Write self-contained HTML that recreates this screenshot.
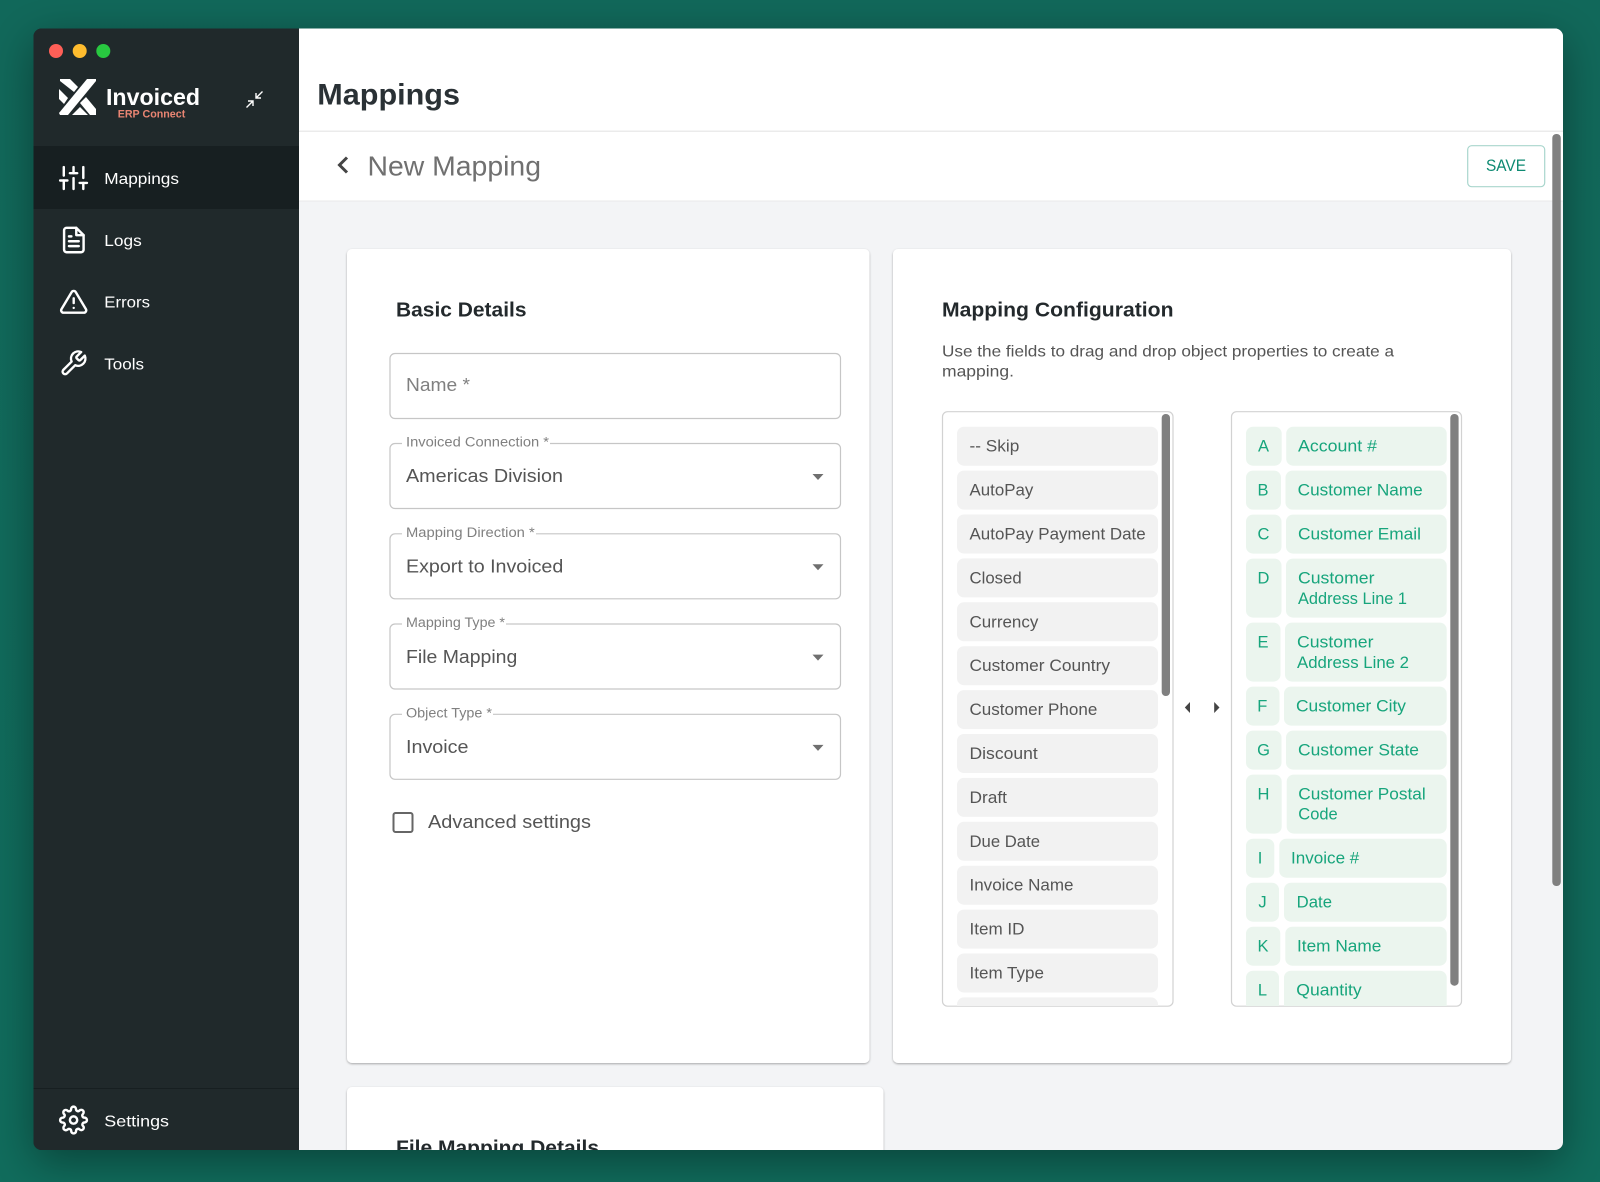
<!DOCTYPE html>
<html>
<head>
<meta charset="utf-8">
<title>Mappings</title>
<style>
html,body{margin:0;padding:0;width:1600px;height:1182px;overflow:hidden;background:#10695a}
svg{display:block}
text{font-family:"Liberation Sans",sans-serif}
.lst{font-size:16.5px;fill:#555}
.grn{font-size:16.5px;fill:#17a57c}
.lab{font-size:13.5px;fill:#808080}
.val{font-size:18px;fill:#555}
.nav{font-size:16px;fill:#fff}
.ic{fill:none;stroke:#fff;stroke-width:2;stroke-linecap:round;stroke-linejoin:round}
</style>
</head>
<body>
<svg xmlns="http://www.w3.org/2000/svg" width="1600" height="1182" viewBox="0 0 1600 1182">
<defs>
<linearGradient id="bg" x1="0" y1="0" x2="0" y2="1"><stop offset="0" stop-color="#11685a"/><stop offset="1" stop-color="#106c5c"/></linearGradient>
<filter id="ws" x="-10%" y="-10%" width="120%" height="125%"><feDropShadow dx="0" dy="12" stdDeviation="22" flood-color="#000" flood-opacity=".38"/></filter>
<filter id="cs" x="-5%" y="-5%" width="110%" height="110%"><feDropShadow dx="0" dy="1" stdDeviation="1" flood-color="#000" flood-opacity=".32"/></filter>
<clipPath id="win"><rect x="33.5" y="28.5" width="1529.5" height="1121.5" rx="8"/></clipPath>
<clipPath id="lb1"><rect x="943" y="412" width="229" height="594" rx="5"/></clipPath>
<clipPath id="lb2"><rect x="1232" y="412" width="229" height="594" rx="5"/></clipPath>
</defs>
<rect width="1600" height="1182" fill="url(#bg)"/>
<rect x="33.5" y="28.5" width="1529.5" height="1121.5" rx="8" fill="#20292b" filter="url(#ws)"/>
<g clip-path="url(#win)">
<rect x="299" y="28" width="1265" height="1122" fill="#f3f4f6"/>
<rect x="299" y="28" width="1265" height="173" fill="#fff"/>
<rect x="299" y="130.5" width="1265" height="1.5" fill="#ebebeb"/>
<rect x="299" y="200.5" width="1265" height="1" fill="#e8e9ea"/>

<!-- sidebar -->
<rect x="33" y="28" width="266" height="1122" fill="#20292b"/>
<rect x="33" y="146" width="266" height="63" fill="#171f21"/>
<rect x="33" y="1088" width="266" height="1" fill="#171f21"/>
<circle cx="56" cy="51" r="7" fill="#fe5f57"/>
<circle cx="79.7" cy="51" r="7" fill="#febc2e"/>
<circle cx="103.3" cy="51" r="7" fill="#28c840"/>

<!-- logo -->
<g fill="#fff">
<polygon points="60,79 70,79 78,87 74,92 60,81"/>
<polygon points="87,79 96,79 96,81 68,115 60,115 59,113"/>
<polygon points="59,89 68,98 64,104 59,99"/>
<polygon points="86,97 96,109 96,115 90,115 80,103"/>
<polygon points="72,115 80,107 88,115"/>
</g>
<text x="106" y="105" font-size="23" font-weight="700" fill="#fff" textLength="94" lengthAdjust="spacingAndGlyphs">Invoiced</text>
<text x="117.7" y="117.3" font-size="11" font-weight="700" fill="#ea8573" textLength="67.6" lengthAdjust="spacingAndGlyphs">ERP Connect</text>
<g fill="none" stroke="#fff" stroke-width="1.4">
<path d="M262.5 91.5L256 98M256 93V98H261"/>
<path d="M246.5 107.5L253 101M248 101H253V106"/>
</g>

<!-- nav icons -->
<g class="ic" transform="translate(58.9,163.4) scale(1.22)">
<line x1="4" y1="21" x2="4" y2="14"/><line x1="4" y1="10" x2="4" y2="3"/><line x1="12" y1="21" x2="12" y2="12"/><line x1="12" y1="8" x2="12" y2="3"/><line x1="20" y1="21" x2="20" y2="16"/><line x1="20" y1="12" x2="20" y2="3"/><line x1="1" y1="14" x2="7" y2="14"/><line x1="9" y1="8" x2="15" y2="8"/><line x1="17" y1="16" x2="23" y2="16"/>
</g>
<g class="ic" transform="translate(59.2,225.4) scale(1.22)">
<path d="M14 2H6a2 2 0 0 0-2 2v16a2 2 0 0 0 2 2h12a2 2 0 0 0 2-2V8z"/><polyline points="14 2 14 8 20 8"/><line x1="16" y1="13" x2="8" y2="13"/><line x1="16" y1="17" x2="8" y2="17"/><polyline points="10 9 9 9 8 9"/>
</g>
<g class="ic" transform="translate(59.3,287.5) scale(1.2)">
<path d="M10.29 3.86L1.82 18a2 2 0 0 0 1.71 3h16.94a2 2 0 0 0 1.71-3L13.71 3.86a2 2 0 0 0-3.42 0z"/><line x1="12" y1="9" x2="12" y2="13"/><line x1="12" y1="17" x2="12.01" y2="17"/>
</g>
<g class="ic" transform="translate(59,349) scale(1.2)">
<path d="M14.7 6.3a1 1 0 0 0 0 1.4l1.6 1.6a1 1 0 0 0 1.4 0l3.77-3.77a6 6 0 0 1-7.94 7.94l-6.91 6.91a2.12 2.12 0 0 1-3-3l6.91-6.91a6 6 0 0 1 7.94-7.94l-3.76 3.76z"/>
</g>
<g class="ic" transform="translate(58.9,1105.4) scale(1.22)">
<circle cx="12" cy="12" r="3"/>
<path d="M19.4 15a1.65 1.65 0 0 0 .33 1.82l.06.06a2 2 0 0 1 0 2.83 2 2 0 0 1-2.83 0l-.06-.06a1.65 1.65 0 0 0-1.82-.33 1.65 1.65 0 0 0-1 1.51V21a2 2 0 0 1-2 2 2 2 0 0 1-2-2v-.09A1.65 1.65 0 0 0 9 19.4a1.65 1.65 0 0 0-1.82.33l-.06.06a2 2 0 0 1-2.83 0 2 2 0 0 1 0-2.83l.06-.06a1.65 1.65 0 0 0 .33-1.82 1.65 1.65 0 0 0-1.51-1H3a2 2 0 0 1-2-2 2 2 0 0 1 2-2h.09A1.65 1.65 0 0 0 4.6 9a1.65 1.65 0 0 0-.33-1.82l-.06-.06a2 2 0 0 1 0-2.83 2 2 0 0 1 2.83 0l.06.06a1.65 1.65 0 0 0 1.82.33H9a1.65 1.65 0 0 0 1-1.51V3a2 2 0 0 1 2-2 2 2 0 0 1 2 2v.09a1.65 1.65 0 0 0 1 1.51 1.65 1.65 0 0 0 1.82-.33l.06-.06a2 2 0 0 1 2.83 0 2 2 0 0 1 0 2.83l-.06.06a1.65 1.65 0 0 0-.33 1.82V9a1.65 1.65 0 0 0 1.51 1H21a2 2 0 0 1 2 2 2 2 0 0 1-2 2h-.09a1.65 1.65 0 0 0-1.51 1z"/>
</g>
<text class="nav" x="104.3" y="184" textLength="74.7" lengthAdjust="spacingAndGlyphs">Mappings</text>
<text class="nav" x="104.3" y="246" textLength="37.4" lengthAdjust="spacingAndGlyphs">Logs</text>
<text class="nav" x="104.3" y="307.7" textLength="45.7" lengthAdjust="spacingAndGlyphs">Errors</text>
<text class="nav" x="104.3" y="369.3" textLength="39.7" lengthAdjust="spacingAndGlyphs">Tools</text>
<text class="nav" x="104.3" y="1126.7" textLength="64.7" lengthAdjust="spacingAndGlyphs">Settings</text>

<!-- headers -->
<text x="317.3" y="104.3" font-size="30" font-weight="700" fill="#2a3135" textLength="142.7" lengthAdjust="spacingAndGlyphs">Mappings</text>
<path d="M347 157.5L339.5 165L347 172.5" fill="none" stroke="#444" stroke-width="3"/>
<text x="367.5" y="175.7" font-size="27.5" fill="#707070" textLength="173.5" lengthAdjust="spacingAndGlyphs">New Mapping</text>
<rect x="1467.7" y="145.7" width="77" height="41" rx="4" fill="#fff" stroke="#a9d6cd" stroke-width="1.2"/>
<text x="1486" y="171" font-size="17" fill="#0e8a72" textLength="40" lengthAdjust="spacingAndGlyphs">SAVE</text>

<!-- cards -->
<rect x="347" y="249" width="522.5" height="814" rx="5" fill="#fff" filter="url(#cs)"/>
<rect x="893" y="249" width="618" height="814" rx="5" fill="#fff" filter="url(#cs)"/>
<rect x="347" y="1087" width="536.5" height="100" rx="5" fill="#fff" filter="url(#cs)"/>
<text x="396" y="316.7" font-size="20.5" font-weight="700" fill="#23292c" textLength="130.5" lengthAdjust="spacingAndGlyphs">Basic Details</text>
<text x="942" y="316.7" font-size="20.5" font-weight="700" fill="#23292c" textLength="231.5" lengthAdjust="spacingAndGlyphs">Mapping Configuration</text>
<text x="396" y="1154.4" font-size="20.5" font-weight="700" fill="#23292c" textLength="203" lengthAdjust="spacingAndGlyphs">File Mapping Details</text>

<!-- form -->
<g fill="#fff" stroke="#c6c6c6" stroke-width="1.2">
<rect x="390" y="353.5" width="450.5" height="65" rx="5"/>
<rect x="390" y="443.5" width="450.5" height="65" rx="5"/>
<rect x="390" y="533.8" width="450.5" height="65" rx="5"/>
<rect x="390" y="624" width="450.5" height="65" rx="5"/>
<rect x="390" y="714.3" width="450.5" height="65" rx="5"/>
</g>
<g fill="#fff">
<rect x="402" y="441" width="148" height="5"/>
<rect x="402" y="531" width="134" height="5"/>
<rect x="402" y="621.5" width="104" height="5"/>
<rect x="402" y="712" width="91" height="5"/>
</g>
<text class="val" x="406" y="391" style="fill:#808080" textLength="64" lengthAdjust="spacingAndGlyphs">Name *</text>
<text class="lab" x="406" y="446.5" textLength="143" lengthAdjust="spacingAndGlyphs">Invoiced Connection *</text>
<text class="lab" x="406" y="536.8" textLength="128.7" lengthAdjust="spacingAndGlyphs">Mapping Direction *</text>
<text class="lab" x="406" y="627" textLength="99" lengthAdjust="spacingAndGlyphs">Mapping Type *</text>
<text class="lab" x="406" y="717.3" textLength="86" lengthAdjust="spacingAndGlyphs">Object Type *</text>
<text class="val" x="406" y="482.2" textLength="157" lengthAdjust="spacingAndGlyphs">Americas Division</text>
<text class="val" x="406" y="572.5" textLength="157.3" lengthAdjust="spacingAndGlyphs">Export to Invoiced</text>
<text class="val" x="406" y="662.8" textLength="111.3" lengthAdjust="spacingAndGlyphs">File Mapping</text>
<text class="val" x="406" y="753.1" textLength="62.5" lengthAdjust="spacingAndGlyphs">Invoice</text>
<g fill="#6f6f6f">
<polygon points="812.5,474 823.5,474 818,480"/>
<polygon points="812.5,564.3 823.5,564.3 818,570.3"/>
<polygon points="812.5,654.6 823.5,654.6 818,660.6"/>
<polygon points="812.5,744.9 823.5,744.9 818,750.9"/>
</g>
<rect x="393.5" y="813" width="19" height="19" rx="2" fill="#fff" stroke="#666" stroke-width="2"/>
<text class="val" x="428" y="827.8" textLength="163" lengthAdjust="spacingAndGlyphs">Advanced settings</text>

<!-- description -->
<text x="942" y="356.3" font-size="16" fill="#555" textLength="452" lengthAdjust="spacingAndGlyphs">Use the fields to drag and drop object properties to create a</text>
<text x="942" y="376.7" font-size="16" fill="#555" textLength="72" lengthAdjust="spacingAndGlyphs">mapping.</text>

<!-- left list -->
<rect x="942.5" y="411.7" width="230.5" height="594.5" rx="5" fill="#fff" stroke="#d2d2d2" stroke-width="1.2"/>
<g clip-path="url(#lb1)">
<g fill="#f2f2f2">
<rect x="957" y="426.7" width="201" height="39" rx="7"/>
<rect x="957" y="470.6" width="201" height="39" rx="7"/>
<rect x="957" y="514.5" width="201" height="39" rx="7"/>
<rect x="957" y="558.4" width="201" height="39" rx="7"/>
<rect x="957" y="602.3" width="201" height="39" rx="7"/>
<rect x="957" y="646.2" width="201" height="39" rx="7"/>
<rect x="957" y="690.1" width="201" height="39" rx="7"/>
<rect x="957" y="734" width="201" height="39" rx="7"/>
<rect x="957" y="777.9" width="201" height="39" rx="7"/>
<rect x="957" y="821.8" width="201" height="39" rx="7"/>
<rect x="957" y="865.7" width="201" height="39" rx="7"/>
<rect x="957" y="909.6" width="201" height="39" rx="7"/>
<rect x="957" y="953.5" width="201" height="39" rx="7"/>
<rect x="957" y="997.4" width="201" height="39" rx="7"/>
</g>
<text class="lst" x="969.5" y="451.7" textLength="49.8" lengthAdjust="spacingAndGlyphs">-- Skip</text>
<text class="lst" x="969.5" y="495.6" textLength="63.8" lengthAdjust="spacingAndGlyphs">AutoPay</text>
<text class="lst" x="969.5" y="539.5" textLength="176.2" lengthAdjust="spacingAndGlyphs">AutoPay Payment Date</text>
<text class="lst" x="969.5" y="583.4" textLength="52.2" lengthAdjust="spacingAndGlyphs">Closed</text>
<text class="lst" x="969.5" y="627.3" textLength="68.8" lengthAdjust="spacingAndGlyphs">Currency</text>
<text class="lst" x="969.5" y="671.2" textLength="140.5" lengthAdjust="spacingAndGlyphs">Customer Country</text>
<text class="lst" x="969.5" y="715.1" textLength="127.8" lengthAdjust="spacingAndGlyphs">Customer Phone</text>
<text class="lst" x="969.5" y="759" textLength="68.2" lengthAdjust="spacingAndGlyphs">Discount</text>
<text class="lst" x="969.5" y="802.9" textLength="37.5" lengthAdjust="spacingAndGlyphs">Draft</text>
<text class="lst" x="969.5" y="846.8" textLength="70.5" lengthAdjust="spacingAndGlyphs">Due Date</text>
<text class="lst" x="969.5" y="890.7" textLength="104" lengthAdjust="spacingAndGlyphs">Invoice Name</text>
<text class="lst" x="969.5" y="934.6" textLength="55" lengthAdjust="spacingAndGlyphs">Item ID</text>
<text class="lst" x="969.5" y="978.5" textLength="74.5" lengthAdjust="spacingAndGlyphs">Item Type</text>
</g>
<rect x="1161.7" y="414" width="8.3" height="282" rx="4" fill="#808080"/>

<!-- arrows -->
<polygon points="1190,702 1190,713 1184.8,707.5" fill="#444"/>
<polygon points="1214.2,702 1214.2,713 1219.5,707.5" fill="#444"/>

<!-- right list -->
<rect x="1231.5" y="411.7" width="230" height="594.5" rx="5" fill="#fff" stroke="#d2d2d2" stroke-width="1.2"/>
<g clip-path="url(#lb2)">
<g fill="#ebf5ee">
<rect x="1246" y="426.7" width="35.7" height="39" rx="7"/><rect x="1286.2" y="426.7" width="160.5" height="39" rx="7"/>
<rect x="1246" y="470.6" width="35" height="39" rx="7"/><rect x="1285.5" y="470.6" width="161.2" height="39" rx="7"/>
<rect x="1246" y="514.6" width="35.5" height="39" rx="7"/><rect x="1286" y="514.6" width="160.7" height="39" rx="7"/>
<rect x="1246" y="558.6" width="35.5" height="59" rx="7"/><rect x="1286" y="558.6" width="160.7" height="59" rx="7"/>
<rect x="1246" y="622.6" width="34.5" height="59" rx="7"/><rect x="1285" y="622.6" width="161.7" height="59" rx="7"/>
<rect x="1246" y="686.6" width="33.5" height="39" rx="7"/><rect x="1284" y="686.6" width="162.7" height="39" rx="7"/>
<rect x="1246" y="730.6" width="35.5" height="39" rx="7"/><rect x="1286" y="730.6" width="160.7" height="39" rx="7"/>
<rect x="1246" y="774.6" width="35.7" height="59" rx="7"/><rect x="1286.7" y="774.6" width="160" height="59" rx="7"/>
<rect x="1246" y="838.7" width="28.3" height="39" rx="7"/><rect x="1279.3" y="838.7" width="167.4" height="39" rx="7"/>
<rect x="1246" y="882.7" width="33" height="39" rx="7"/><rect x="1284" y="882.7" width="162.7" height="39" rx="7"/>
<rect x="1246" y="926.7" width="34.3" height="39" rx="7"/><rect x="1285.3" y="926.7" width="161.4" height="39" rx="7"/>
<rect x="1246" y="970.7" width="33" height="60" rx="7"/><rect x="1284" y="970.7" width="162.7" height="60" rx="7"/>
</g>
<g text-anchor="middle">
<text class="grn" x="1263.5" y="451.7">A</text>
<text class="grn" x="1263" y="495.6">B</text>
<text class="grn" x="1263.5" y="539.6">C</text>
<text class="grn" x="1263.5" y="583.6">D</text>
<text class="grn" x="1263" y="647.6">E</text>
<text class="grn" x="1262.3" y="711.6">F</text>
<text class="grn" x="1263.5" y="755.6">G</text>
<text class="grn" x="1263.5" y="799.6">H</text>
<text class="grn" x="1260" y="863.7">I</text>
<text class="grn" x="1262.5" y="907.7">J</text>
<text class="grn" x="1263" y="951.7">K</text>
<text class="grn" x="1262.5" y="995.7">L</text>
</g>
<text class="grn" x="1298" y="451.7" textLength="79" lengthAdjust="spacingAndGlyphs">Account #</text>
<text class="grn" x="1297.7" y="495.6" textLength="125" lengthAdjust="spacingAndGlyphs">Customer Name</text>
<text class="grn" x="1298" y="539.6" textLength="123" lengthAdjust="spacingAndGlyphs">Customer Email</text>
<text class="grn" x="1298" y="583.6" textLength="76.5" lengthAdjust="spacingAndGlyphs">Customer</text>
<text class="grn" x="1298" y="604" textLength="109" lengthAdjust="spacingAndGlyphs">Address Line 1</text>
<text class="grn" x="1297" y="647.6" textLength="76.5" lengthAdjust="spacingAndGlyphs">Customer</text>
<text class="grn" x="1297" y="668" textLength="112" lengthAdjust="spacingAndGlyphs">Address Line 2</text>
<text class="grn" x="1296" y="711.6" textLength="110" lengthAdjust="spacingAndGlyphs">Customer City</text>
<text class="grn" x="1298" y="755.6" textLength="121" lengthAdjust="spacingAndGlyphs">Customer State</text>
<text class="grn" x="1298.3" y="799.6" textLength="127.4" lengthAdjust="spacingAndGlyphs">Customer Postal</text>
<text class="grn" x="1298.3" y="819.6" textLength="39.4" lengthAdjust="spacingAndGlyphs">Code</text>
<text class="grn" x="1291" y="863.7" textLength="68.3" lengthAdjust="spacingAndGlyphs">Invoice #</text>
<text class="grn" x="1296.7" y="907.7" textLength="35.3" lengthAdjust="spacingAndGlyphs">Date</text>
<text class="grn" x="1297" y="951.7" textLength="84.3" lengthAdjust="spacingAndGlyphs">Item Name</text>
<text class="grn" x="1296.3" y="995.7" textLength="65.4" lengthAdjust="spacingAndGlyphs">Quantity</text>
</g>
<rect x="1450.3" y="414" width="8.3" height="571.7" rx="4" fill="#808080"/>

<!-- main scrollbar -->
<rect x="1552.3" y="134" width="8.5" height="752" rx="4" fill="#808080"/>
</g>
</svg>
</body>
</html>
